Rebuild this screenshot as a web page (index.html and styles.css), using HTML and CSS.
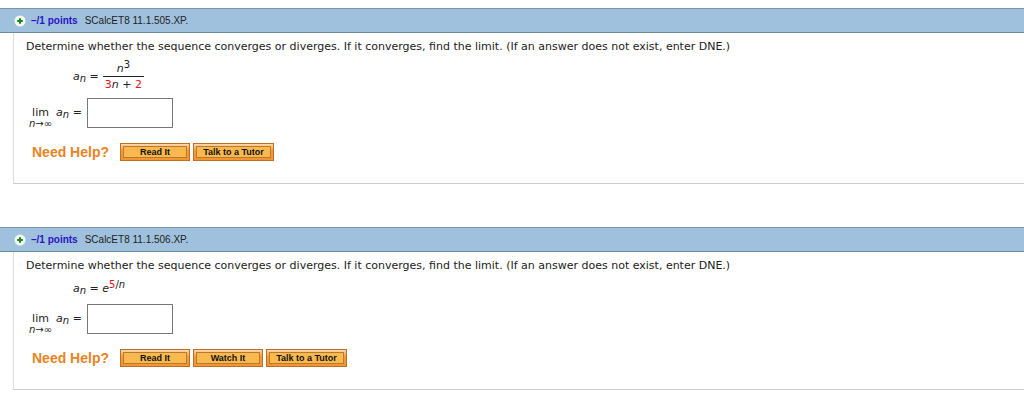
FILE: index.html
```
<!DOCTYPE html>
<html lang="en">
<head>
    <meta charset="UTF-8">
    <title>Homework 11.1</title>
    <link rel="stylesheet" href="styles.css">
</head>
<body>
    <section class="question">
        <header class="question-bar">
            <svg class="expand" viewBox="0 0 12 12" aria-hidden="true">
                <circle cx="6" cy="6" r="5.5" fill="#f4f8f2"/>
                <path d="M6 3.2v5.6M3.2 6h5.6" stroke="#1c861c" stroke-width="2"/>
            </svg>
            <a class="points" href="#q505">–/1 points</a>
            <span class="source">SCalcET8 11.1.505.XP.</span>
        </header>
        <div class="question-body" id="q505">
            <p class="prompt">Determine whether the sequence converges or diverges. If it converges, find the limit. (If an answer does not exist, enter DNE.)</p>
            <div class="formula">
                <span><i>a<sub>n</sub></i> =</span>
                <span class="fraction">
                    <span class="numerator"><i>n</i><sup>3</sup></span>
                    <span class="denominator"><b>3</b><i>n</i> + <b>2</b></span>
                </span>
            </div>
            <div class="answer">
                <label class="limit" for="answer505">
                    <span class="lim"><span>lim</span><small><i>n</i>→∞</small></span>
                    <span><i>a<sub>n</sub></i> =</span>
                </label>
                <input class="blank" type="text" id="answer505">
            </div>
            <div class="help">
                <span class="help-title">Need Help?</span>
                <button class="help-button" type="button"><span>Read It</span></button>
                <button class="help-button wide" type="button"><span>Talk to a Tutor</span></button>
            </div>
        </div>
    </section>

    <section class="question">
        <header class="question-bar">
            <svg class="expand" viewBox="0 0 12 12" aria-hidden="true">
                <circle cx="6" cy="6" r="5.5" fill="#f4f8f2"/>
                <path d="M6 3.2v5.6M3.2 6h5.6" stroke="#1c861c" stroke-width="2"/>
            </svg>
            <a class="points" href="#q506">–/1 points</a>
            <span class="source">SCalcET8 11.1.506.XP.</span>
        </header>
        <div class="question-body" id="q506">
            <p class="prompt">Determine whether the sequence converges or diverges. If it converges, find the limit. (If an answer does not exist, enter DNE.)</p>
            <div class="formula">
                <span><i>a<sub>n</sub></i> = <i>e</i><sup><b>5</b>/<i>n</i></sup></span>
            </div>
            <div class="answer">
                <label class="limit" for="answer506">
                    <span class="lim"><span>lim</span><small><i>n</i>→∞</small></span>
                    <span><i>a<sub>n</sub></i> =</span>
                </label>
                <input class="blank" type="text" id="answer506">
            </div>
            <div class="help">
                <span class="help-title">Need Help?</span>
                <button class="help-button" type="button"><span>Read It</span></button>
                <button class="help-button" type="button"><span>Watch It</span></button>
                <button class="help-button wide" type="button"><span>Talk to a Tutor</span></button>
            </div>
        </div>
    </section>
</body>
</html>
```
FILE: styles.css
```
* {
    box-sizing: border-box;
}
body {
    margin: 0;
    padding-top: 8px;
    background: #fff;
    color: #222;
    font-family: Verdana, "DejaVu Sans", sans-serif;
    font-size: 11px;
    line-height: 18px;
}
.question {
    margin-bottom: 43px;
}
.question-bar {
    display: flex;
    align-items: center;
    height: 25px;
    padding: 0 14px;
    background: #9fc1dd;
    border-top: 1px solid #7796ad;
    border-bottom: 1px solid #6b899f;
    font-family: "Liberation Sans", Arial, sans-serif;
    font-size: 10px;
}
.expand {
    width: 12px;
    height: 12px;
    margin-right: 5px;
}
.points {
    margin-right: 7px;
    color: #2a14c8;
    font-weight: bold;
    text-decoration: none;
}
.question-body {
    margin-left: 13px;
    padding: 5px 0 22px 12px;
    border-left: 1px solid #ddd;
    border-bottom: 1px solid #ccc;
}
.prompt {
    margin: 0 0 5px;
}
.formula {
    display: flex;
    align-items: center;
    gap: 4px;
    margin: 0 0 6px 47px;
}
sub, sup {
    font-size: 10px;
    line-height: 0;
}
sub {
    vertical-align: -2px;
}
sup {
    vertical-align: 4px;
}
.fraction {
    display: flex;
    flex-direction: column;
    text-align: center;
    line-height: 15px;
}
.numerator {
    border-bottom: 1px solid #222;
}
.denominator {
    padding: 0 2px;
}
.formula b {
    color: #f01020;
    font-weight: normal;
}
.answer {
    display: flex;
    align-items: flex-start;
    gap: 5px;
    margin: 0 0 15px 3px;
}
.limit {
    display: flex;
    gap: 4px;
    padding-top: 6px;
}
.lim {
    display: flex;
    flex-direction: column;
    align-items: center;
}
.lim small {
    font-size: 10px;
    line-height: 4px;
}
.blank {
    width: 86px;
    height: 30px;
    padding: 2px 4px;
    border: 1px solid #777;
    background: #fff;
    font: inherit;
}
.help {
    display: flex;
    align-items: center;
    gap: 3px;
    margin-left: 6px;
    font-family: "Liberation Sans", Arial, sans-serif;
    font-weight: bold;
}
.help-title {
    margin-right: 8px;
    color: #e98324;
    font-size: 14px;
}
.help-button {
    width: 70px;
    height: 18px;
    padding: 2px;
    border: 1px solid #bd6f26;
    background: linear-gradient(#fbd9b0, #f59a3c 40%, #f49434);
    color: #111;
    font: inherit;
    font-size: 9px;
    line-height: 12px;
}
.help-button span {
    display: block;
    border: 1px solid #b87a2c;
    background: #fab94e;
    line-height: 10px;
}
.wide {
    width: 81px;
}
```
